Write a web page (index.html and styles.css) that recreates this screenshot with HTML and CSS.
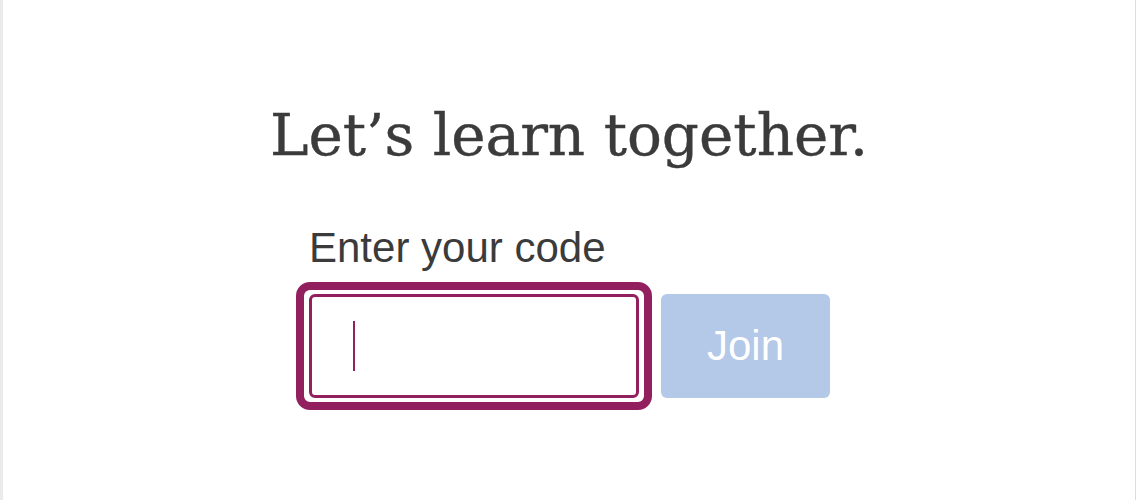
FILE: index.html
```html
<!DOCTYPE html>
<html lang="en">
<head>
    <meta charset="UTF-8">
    <meta name="viewport" content="width=device-width, initial-scale=1.0">
    <title>Join a class</title>
    <link rel="stylesheet" href="styles.css">
</head>
<body>
    <div class="frame">
        <h1 class="title">Let’s learn together.</h1>
        <form class="join-form" id="joinForm">
            <label class="code-label" for="code">Enter your code</label>
            <div class="code-row">
                <div class="code-field">
                    <input type="text" id="code" name="code" class="code-input" autocomplete="off">
                    <span class="caret"></span>
                </div>
                <button type="button" class="join-btn" disabled>Join</button>
            </div>
        </form>
    </div>
</body>
</html>
```

FILE: styles.css
```css
html, body { margin: 0; padding: 0; }
body { background: #fff; color: #3b3b3b; }
.frame {
    min-height: 500px;
    box-sizing: border-box;
    border-left: 3px solid #ebebeb;
    border-right: 1px solid #dcdcdc;
    padding-top: 99px;
}
.title {
    margin: 0;
    text-align: center;
    font-family: "DejaVu Serif", serif;
    font-weight: normal;
    font-size: 58px;
    line-height: 72px;
    letter-spacing: 0;
    -webkit-text-stroke: 0.4px #3b3b3b;
}
.join-form { width: 546px; margin: 53px auto 0; }
.code-label {
    display: block;
    margin: 0 0 10px 13px;
    font-family: "Liberation Sans", Arial, sans-serif;
    font-size: 42px;
    line-height: 48px;
}
.code-row { display: flex; align-items: center; gap: 9px; }
.code-field {
    position: relative;
    border: 8px solid #921f5e;
    border-radius: 14px;
    padding: 4px 5px;
    background: #fff;
}
.code-input {
    display: block;
    box-sizing: border-box;
    width: 330px;
    height: 104px;
    border: 3px solid #921f5e;
    border-radius: 6px;
    padding: 0 42px;
    font-family: "Liberation Sans", Arial, sans-serif;
    font-size: 42px;
    color: #3b3b3b;
    caret-color: transparent;
    outline: none;
}
.caret {
    position: absolute;
    left: 49px;
    top: 31px;
    width: 2px;
    height: 50px;
    background: #921f5e;
}
.join-btn {
    width: 169px;
    height: 104px;
    border: none;
    border-radius: 6px;
    background: #b4c8e8;
    color: #fff;
    font-family: "Liberation Sans", Arial, sans-serif;
    font-size: 42px;
    cursor: default;
}
```
